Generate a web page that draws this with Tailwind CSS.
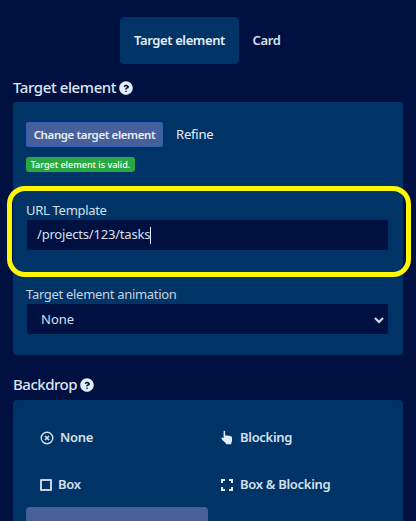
<!DOCTYPE html>
<html lang="en">
<head>
  <meta charset="UTF-8" />
  <title>Tour step</title>
  <script src="https://cdn.jsdelivr.net/npm/@tailwindcss/browser@4"></script>
</head>
<body class="bg-[#001141] h-[521px] overflow-hidden font-['Noto_Sans','Open_Sans',sans-serif] text-[#e3edf7]">
  <div class="px-[13px] pt-[17px]">
    <!-- Tabs -->
    <div class="flex justify-center h-[47px] pr-[2px]">
      <div class="w-[119px] flex items-center justify-center rounded bg-[#003366] text-[13px] font-semibold tracking-[-0.4px]">Target element</div>
      <div class="w-[55px] flex items-center justify-center text-[13px] font-semibold tracking-[-0.4px] text-[#d5e0ec]">Card</div>
    </div>

    <!-- Target element -->
    <div class="mt-[12px] h-[23px] flex items-center gap-[3px] text-[15px] font-medium tracking-[-0.4px] text-[#dbe6f1]">
      Target element
      <svg class="w-[14px] h-[14px]" viewBox="0 0 512 512" fill="#e3edf7"><path d="M256 8C119 8 8 119 8 256s111 248 248 248 248-111 248-248S393 8 256 8zm0 400c-18 0-32-14-32-32s14-32 32-32 32 14 32 32-14 32-32 32zm44-137c-14 8-16 14-16 25v6c0 7-5 12-12 12h-32c-7 0-12-5-12-12v-8c0-30 23-42 40-52 15-8 24-14 24-25 0-15-19-25-34-25-20 0-29 10-42 26-4 5-12 6-17 2l-20-15c-5-4-6-11-3-16 22-33 50-51 93-51 45 0 93 35 93 81 0 61-62 62-62 52z"/></svg>
    </div>
    <section class="mt-[3px] h-[253px] rounded bg-[#003366] px-[13px] pt-[20px]">
      <div class="flex items-center h-[25px]">
        <button class="w-[137px] h-[25px] rounded-[2px] border border-[#2f5fb0] bg-[#47609a] whitespace-nowrap text-[11.5px] font-semibold tracking-[-0.4px] text-[#e8eef6]">Change target element</button>
        <span class="ml-[13px] text-[13px] tracking-[-0.2px] text-[#e8eef6]">Refine</span>
      </div>
      <div class="mt-[10px] w-[109px] h-[15px] rounded-[3px] bg-[#28a745] flex items-center justify-center text-[9px] font-medium text-white">Target element is valid.</div>

      <div class="relative mt-[14px] h-[90px]">
        <!-- highlight ring -->
        <div class="absolute left-[-19px] right-[-21px] top-0 h-[91px] border-[5px] border-[#fff700] rounded-[18px]"></div>
        <label class="block pt-[15px] text-[13px] leading-[18px] tracking-[-0.3px] text-[#d5e0ec]">URL Template</label>
        <div class="ml-px mt-px w-[361px] h-[30px] rounded-[2px] bg-[#001141] flex items-center pl-[10px] text-[13px] tracking-[-0.2px] text-[#d5e0ec]">
          /projects/123/tasks<span class="w-px h-[17px] bg-[#e3edf7]"></span>
        </div>
      </div>

      <label class="block mt-[9px] text-[13px] leading-[18px] tracking-[-0.3px] text-[#c6d3e1]">Target element animation</label>
      <div class="ml-px mt-px w-[361px] h-[30px] pt-px rounded-[2px] bg-[#001141] flex items-center justify-between pl-[14px] pr-[4px] text-[13px] text-[#d5e0ec]">
        None
        <svg class="w-[10px] h-[10px]" viewBox="0 0 10 10" fill="none" stroke="#d5e0ec" stroke-width="2"><path d="M1 3l4 4 4-4"/></svg>
      </div>
    </section>

    <!-- Backdrop -->
    <div class="mt-[18px] h-[23px] flex items-center gap-[3px] text-[15px] font-medium tracking-[-0.5px] text-[#dbe6f1]">
      Backdrop
      <svg class="w-[14px] h-[14px]" viewBox="0 0 512 512" fill="#e3edf7"><path d="M256 8C119 8 8 119 8 256s111 248 248 248 248-111 248-248S393 8 256 8zm0 400c-18 0-32-14-32-32s14-32 32-32 32 14 32 32-14 32-32 32zm44-137c-14 8-16 14-16 25v6c0 7-5 12-12 12h-32c-7 0-12-5-12-12v-8c0-30 23-42 40-52 15-8 24-14 24-25 0-15-19-25-34-25-20 0-29 10-42 26-4 5-12 6-17 2l-20-15c-5-4-6-11-3-16 22-33 50-51 93-51 45 0 93 35 93 81 0 61-62 62-62 52z"/></svg>
    </div>
    <section class="mt-[4px] h-[140px] rounded bg-[#003366] px-[13px] text-[13px] font-semibold tracking-[-0.3px] text-[#d5e0ec]">
      <div class="grid grid-cols-2 pt-[26px]">
        <div class="flex items-center h-[24px] pl-[14px] gap-[6px]">
          <svg class="w-[14px] h-[14px] mb-[1px]" viewBox="0 0 14 14" fill="none" stroke="#d5e0ec"><circle cx="7" cy="7" r="5.8" stroke-width="1.4"/><path d="M5 5l4 4M9 5l-4 4" stroke-width="1.7"/></svg>
          None
        </div>
        <div class="flex items-center h-[24px] pl-[13px] gap-[6px]">
          <svg class="w-[13px] h-[15px] mb-[2px]" viewBox="0 0 13 15" fill="#e3edf7"><path d="M2.6 1.2c0-.7 1.5-.7 1.5 0v4.6c.4-.4 1.3-.4 1.6 0 .5-.3 1.3-.3 1.6.2.6-.3 1.5-.2 1.8.3.7-.2 1.9.2 1.9 1.2v2.700c0 1.3-.5 2-.8 3.200v.8H5v-.8C4 12.300 1.500 10.500.6 9c-.5-.9.4-1.800 1.300-1.200l.7.5z"/></svg>
          Blocking
        </div>
      </div>
      <div class="grid grid-cols-2 mt-[23px]">
        <div class="flex items-center h-[24px] pl-[14px] gap-[6px]">
          <span class="w-[12px] h-[12px] mb-[1px] border-2 border-[#c6d3e1] rounded-[1px]"></span>
          Box
        </div>
        <div class="flex items-center h-[24px] pl-[13px] gap-[7px]">
          <svg class="w-[12px] h-[12px] mb-[1px]" viewBox="0 0 12 12" fill="none" stroke="#e3edf7" stroke-width="2"><path d="M1 4V1h3M8 1h3v3M11 8v3H8M4 11H1V8"/></svg>
          Box &amp; Blocking
        </div>
      </div>
      <div class="mt-[10px] w-[182px] h-[30px] rounded bg-[#47609a]"></div>
    </section>
  </div>
</body>
</html>
